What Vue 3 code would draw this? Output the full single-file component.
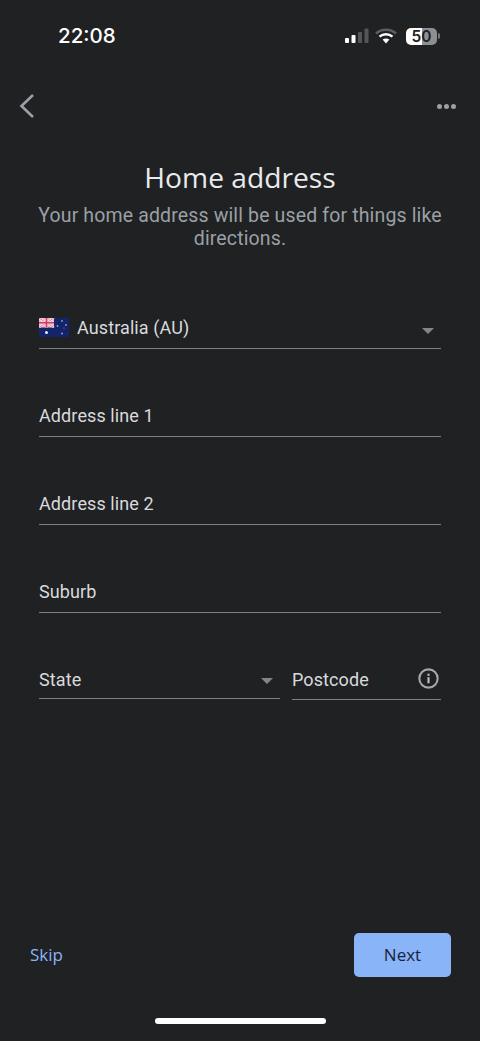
<script setup>
const fields = ['Address line 1', 'Address line 2', 'Suburb']
</script>

<template>
  <div class="page">
    <header class="status">
      <span class="time">22:08</span>
      <div class="status-icons">
        <svg class="signal" width="24" height="16" viewBox="0 0 24 16">
          <rect x="0" y="10" width="4" height="5" rx="1" fill="#fff" />
          <rect x="6.5" y="7" width="4" height="8" rx="1" fill="#fff" />
          <rect x="13" y="4" width="4" height="11" rx="1" fill="#55565a" />
          <rect x="19.5" y="0.5" width="4" height="14.5" rx="1" fill="#55565a" />
        </svg>
        <svg class="wifi" width="22" height="16" viewBox="0 0 22 16">
          <path d="M1 5.5 C6.5 0.5 15.5 0.5 21 5.5" fill="none" stroke="#5d5e62" stroke-width="2.4" />
          <path d="M4.5 8.6 C8.2 5.5 13.8 5.5 17.5 8.6" fill="none" stroke="#fff" stroke-width="2.4" />
          <path d="M11 15.5 L7.6 11.6 C9.5 10.2 12.5 10.2 14.4 11.6 Z" fill="#fff" />
        </svg>
        <div class="battery">
          <div class="battery-body"><span class="battery-text">50</span></div>
          <span class="battery-cap"></span>
        </div>
      </div>
    </header>

    <nav class="toolbar">
      <svg width="18" height="26" viewBox="0 0 18 26">
        <path d="M15 2 L3.5 13 L15 24" fill="none" stroke="#9aa0a6" stroke-width="2.6" />
      </svg>
      <div class="dots"><i></i><i></i><i></i></div>
    </nav>

    <main class="content">
      <h1 class="title">Home address</h1>
      <p class="subtitle">Your home address will be used for things like directions.</p>

      <form class="form" @submit.prevent>
        <div class="field country">
          <svg class="flag" width="30" height="19" viewBox="0 0 30 19">
            <rect width="30" height="19" fill="#14246b" />
            <rect width="15" height="9.5" fill="#e9b6c6" />
            <path d="M0 0 L15 9.5 M15 0 L0 9.5" stroke="#fff" stroke-width="2" />
            <path d="M0 0 L15 9.5 M15 0 L0 9.5" stroke="#cf4a72" stroke-width="0.8" />
            <path d="M7.5 0 V9.5 M0 4.75 H15" stroke="#f3cfd9" stroke-width="3" />
            <path d="M7.5 0 V9.5 M0 4.75 H15" stroke="#d6365f" stroke-width="1.6" />
            <circle cx="7.5" cy="14.5" r="1.5" fill="#e8ecf8" />
            <circle cx="23" cy="3" r="0.9" fill="#8f9cd6" />
            <circle cx="23" cy="15.5" r="1" fill="#8f9cd6" />
            <circle cx="18.5" cy="8" r="0.9" fill="#8f9cd6" />
            <circle cx="27" cy="7" r="0.9" fill="#8f9cd6" />
            <circle cx="25" cy="10" r="0.5" fill="#8f9cd6" />
          </svg>
          <span class="label">Australia (AU)</span>
          <span class="caret"></span>
        </div>

        <div v-for="f in fields" :key="f" class="field">
          <span class="label">{{ f }}</span>
        </div>

        <div class="split">
          <div class="field state">
            <span class="label">State</span>
            <span class="caret"></span>
          </div>
          <div class="field postcode">
            <span class="label">Postcode</span>
            <svg class="info" width="21" height="21" viewBox="0 0 22 22">
              <circle cx="11" cy="11" r="9.6" fill="none" stroke="#a4a8ad" stroke-width="2.2" />
              <rect x="9.9" y="9.6" width="2.2" height="6.4" fill="#bdc1c6" />
              <rect x="9.9" y="6" width="2.2" height="2.2" fill="#bdc1c6" />
            </svg>
          </div>
        </div>
      </form>
    </main>

    <footer class="actions">
      <a class="skip">Skip</a>
      <button class="next" type="button">Next</button>
    </footer>
    <div class="home-wrap"><div class="home"></div></div>
  </div>
</template>

<style>
html, body { margin: 0; background: #202123; }
</style>

<style scoped>
.page {
  width: 480px;
  height: 1041px;
  background: #202123;
  display: flex;
  flex-direction: column;
  font-family: Roboto, "Liberation Sans", sans-serif;
  overflow: hidden;
}
.status {
  height: 92px;
  box-sizing: border-box;
  padding: 22px 40px 0 59px;
  display: flex;
  justify-content: space-between;
  align-items: flex-start;
}
.time {
  color: #fff;
  font: 500 20.5px/28px Inter, sans-serif;
  margin-left: -1px;
}
.status-icons {
  display: flex;
  align-items: center;
  gap: 9px;
  height: 28px;
}
.signal { margin-right: -3px; }
.battery { display: flex; align-items: center; gap: 1px; }
.battery-body {
  width: 31px;
  height: 17px;
  border-radius: 5px;
  background: linear-gradient(90deg, #fff 50%, #8e8f92 50%);
  display: flex;
  align-items: center;
  justify-content: center;
}
.battery-text { font: 600 15.5px/17px Inter, sans-serif; color: #202123; }
.battery-cap { width: 2px; height: 6px; background: #77787b; border-radius: 0 2px 2px 0; }
.toolbar {
  height: 28px;
  padding: 0 24px 0 18px;
  display: flex;
  align-items: center;
  justify-content: space-between;
}
.dots { display: flex; gap: 2px; }
.dots i { width: 5px; height: 5px; border-radius: 50%; background: #9aa0a6; }
.content {
  flex: 1;
  padding: 0 39px;
  display: flex;
  flex-direction: column;
  align-items: stretch;
}
.title {
  margin: 37px 0 0;
  color: #e8eaed;
  font: 400 28.2px/40px "Open Sans", Roboto, sans-serif;
  text-align: center;
}
.subtitle {
  margin: 7px -6px 0;
  color: #9aa0a6;
  font: 400 19.5px/23px Roboto, sans-serif;
  text-align: center;
  letter-spacing: 0.14px;
}
.form {
  margin-top: 50px;
  display: flex;
  flex-direction: column;
  gap: 39px;
}
.field {
  height: 49px;
  box-sizing: border-box;
  padding-top: 6px;
  border-bottom: 1px solid #7c7f83;
  display: flex;
  align-items: center;
}
.label { color: #d8dadd; font-size: 18px; letter-spacing: 0.1px; }
.flag { margin-right: 8px; }
.caret {
  margin-left: auto;
  margin-right: 7px;
  margin-top: 8px;
  width: 0;
  height: 0;
  border-left: 6.5px solid transparent;
  border-right: 6.5px solid transparent;
  border-top: 6px solid #80868b;
}
.split { display: flex; gap: 12px; margin-top: -2px; }
.state { flex: 0 0 241px; padding-top: 10px; }
.state .caret { margin-top: 4px; }
.postcode { flex: 1; min-width: 0; height: 50px; padding-top: 10px; }
.info { margin-left: auto; margin-right: 2px; margin-top: -2px; }
.actions {
  display: flex;
  justify-content: space-between;
  align-items: center;
  padding: 0 29px 0 30px;
  margin-bottom: 41px;
}
.skip { color: #8ab4f8; font: 500 17px/20px "Open Sans", Roboto, sans-serif; }
.next {
  width: 97px;
  height: 44px;
  border: 0;
  border-radius: 5px;
  background: #8ab4f8;
  color: #17233a;
  font: 500 17px/20px "Open Sans", Roboto, sans-serif;
}
.home-wrap { height: 23px; display: flex; justify-content: center; }
.home { width: 171px; height: 6px; border-radius: 3px; background: #fff; }
</style>
